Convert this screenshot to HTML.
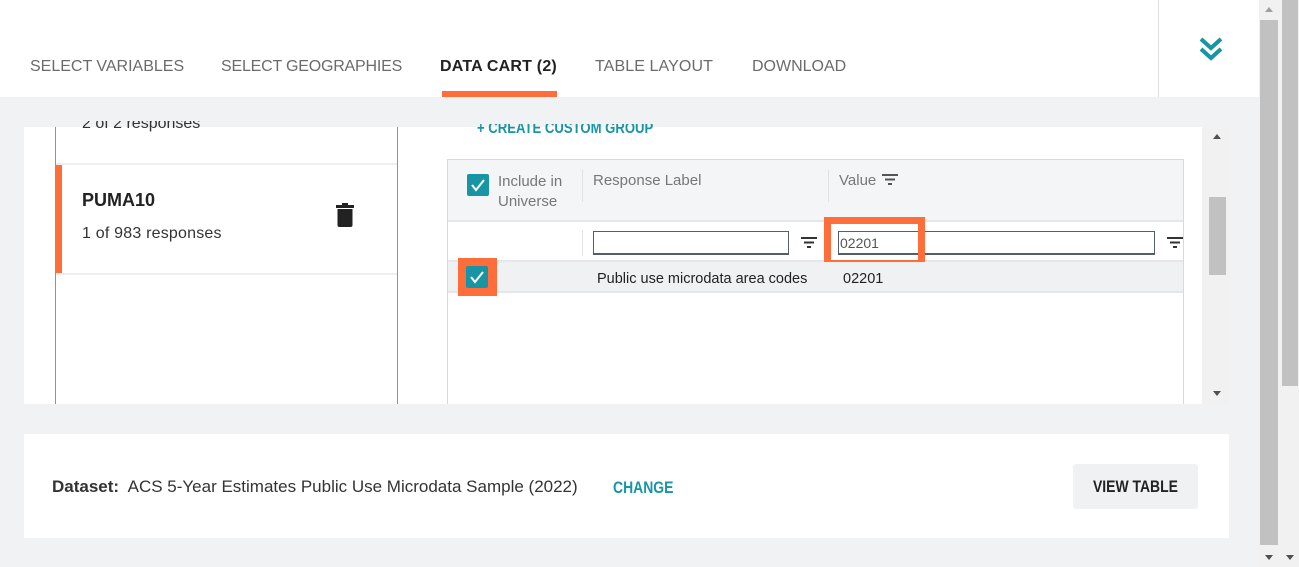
<!DOCTYPE html>
<html><head><meta charset="utf-8"><style>
*{margin:0;padding:0;box-sizing:border-box}
body{width:1299px;height:567px;overflow:hidden;background:#f1f2f4;font-family:"Liberation Sans",sans-serif;position:relative}
.a{position:absolute}
.tab{position:absolute;top:58px;font-size:16px;color:#6b6b6b;white-space:nowrap}
.cond{display:inline-block;transform:scaleX(.82);transform-origin:left center;font-weight:bold;white-space:nowrap}
.cb{position:absolute;width:22px;height:22px;background:#1795a5;border-radius:2px}
.cb svg{position:absolute;left:3px;top:3px}
</style></head><body>
<!-- header -->
<div class="a" style="left:0;top:0;width:1259px;height:97px;background:#fff"></div>
<div class="tab" style="left:30px">SELECT VARIABLES</div>
<div class="tab" style="left:221px;letter-spacing:-0.2px">SELECT GEOGRAPHIES</div>
<div class="tab" style="left:440px;color:#222;font-weight:bold;font-size:16px;letter-spacing:0.2px">DATA CART (2)</div>
<div class="a" style="left:442px;top:91px;width:115px;height:6px;background:#ff6d3a"></div>
<div class="tab" style="left:595px;letter-spacing:0.1px">TABLE LAYOUT</div>
<div class="tab" style="left:752px">DOWNLOAD</div>
<div class="a" style="left:1158px;top:0;width:1px;height:97px;background:#ddd"></div>
<svg class="a" style="left:1198px;top:36px" width="26" height="26" viewBox="0 0 26 26"><path d="M3 3 L13 12 L23 3 M3 13 L13 22 L23 13" stroke="#1795a5" stroke-width="4" fill="none"/></svg>

<!-- top white panel -->
<div class="a" style="left:24px;top:127px;width:1205px;height:277px;background:#fff"></div>
<div class="a" style="left:56px;top:121px;width:300px;height:12px;overflow:hidden">
  <div class="a" style="left:26px;top:-6px;font-size:16px;color:#333;white-space:nowrap">2 of 2 responses</div>
</div>
<div class="a" style="left:470px;top:124px;width:300px;height:14px;overflow:hidden">
  <div class="a" style="left:7px;top:-4px;font-size:16px;color:#1795a5"><span class="cond">+ CREATE CUSTOM GROUP</span></div>
</div>
<div class="a" style="left:55px;top:127px;width:1px;height:277px;background:#8a93a5"></div>
<div class="a" style="left:397px;top:127px;width:1px;height:277px;background:#8a93a5"></div>
<div class="a" style="left:56px;top:163px;width:341px;height:2px;background:#eceef0"></div>
<div class="a" style="left:56px;top:165px;width:6px;height:108px;background:#ff6d3a"></div>
<div class="a" style="left:56px;top:273px;width:341px;height:2px;background:#eceef0"></div>
<div class="a" style="left:82px;top:190px;font-size:18px;font-weight:bold;color:#222">PUMA10</div>
<div class="a" style="left:82px;top:225px;font-size:16px;color:#333;letter-spacing:0.2px">1 of 983 responses</div>
<svg class="a" style="left:335px;top:203px" width="20" height="25" viewBox="0 0 20 25"><rect x="1" y="2" width="18" height="3" fill="#222"/><rect x="7" y="0" width="6" height="3" fill="#222"/><path d="M2.5 6 H17.5 V22 Q17.5 24 15.5 24 H4.5 Q2.5 24 2.5 22 Z" fill="#222"/></svg>

<!-- table -->
<div class="a" style="left:447px;top:159px;width:737px;height:245px;border:1px solid #d6d9dd;border-bottom:none;background:#fff"></div>
<div class="a" style="left:448px;top:160px;width:735px;height:62px;background:#f4f5f6;border-bottom:2px solid #e4e6e9"></div>
<div class="cb" style="left:467px;top:174px"><svg width="16" height="16" viewBox="0 0 16 16"><path d="M2 8 L6 13 L14 3" stroke="#fff" stroke-width="2" fill="none"/></svg></div>
<div class="a" style="left:498px;top:172px;font-size:15px;color:#777;line-height:20px">Include in<br>Universe</div>
<div class="a" style="left:582px;top:170px;width:1px;height:32px;background:#e0e2e5"></div>
<div class="a" style="left:593px;top:172px;font-size:15px;color:#777">Response Label</div>
<div class="a" style="left:828px;top:170px;width:1px;height:32px;background:#e0e2e5"></div>
<div class="a" style="left:839px;top:172px;font-size:15px;color:#777">Value</div>
<svg class="a" style="left:882px;top:174px" width="16" height="12" viewBox="0 0 16 12"><rect x="0" y="0" width="16" height="2" fill="#555"/><rect x="3" y="4.5" width="10" height="2" fill="#555"/><rect x="6" y="9" width="4" height="2" fill="#555"/></svg>
<!-- filter row -->
<div class="a" style="left:448px;top:224px;width:735px;height:38px;background:#fff;border-bottom:2px solid #e4e6e9"></div>
<div class="a" style="left:582px;top:230px;width:1px;height:26px;background:#e0e2e5"></div>
<div class="a" style="left:593px;top:231px;width:196px;height:24px;border:1px solid #555c6a;border-width:1px 1px 2px 1px"></div>
<svg class="a" style="left:801px;top:237px" width="16" height="12" viewBox="0 0 16 12"><rect x="0" y="0" width="16" height="2" fill="#333"/><rect x="3" y="4.5" width="10" height="2" fill="#333"/><rect x="6" y="9" width="4" height="2" fill="#333"/></svg>
<div class="a" style="left:838px;top:231px;width:317px;height:24px;border:1px solid #555c6a;border-width:1px 1px 2px 1px"></div>
<div class="a" style="left:840px;top:235px;font-size:14px;color:#555">02201</div>
<div class="a" style="left:824px;top:217px;width:101px;height:50px;border:7px solid #ff6d3a"></div>
<svg class="a" style="left:1167px;top:237px" width="16" height="12" viewBox="0 0 16 12"><rect x="0" y="0" width="16" height="2" fill="#333"/><rect x="3" y="4.5" width="10" height="2" fill="#333"/><rect x="6" y="9" width="4" height="2" fill="#333"/></svg>
<!-- data row -->
<div class="a" style="left:448px;top:262px;width:735px;height:31px;background:#f0f1f2;border-bottom:2px solid #e4e6e9"></div>
<div class="a" style="left:458px;top:258px;width:39px;height:38px;background:#ff6d3a"></div>
<div class="cb" style="left:466px;top:266px"><svg width="16" height="16" viewBox="0 0 16 16"><path d="M2 8 L6 13 L14 3" stroke="#fff" stroke-width="2" fill="none"/></svg></div>
<div class="a" style="left:597px;top:271px;font-size:14.5px;color:#222">Public use microdata area codes</div>
<div class="a" style="left:843px;top:271px;font-size:14.5px;color:#222">02201</div>

<!-- inner scrollbar -->
<div class="a" style="left:1202px;top:127px;width:27px;height:277px;background:#f1f1f1"></div>
<div class="a" style="left:1209px;top:197px;width:17px;height:78px;background:#c1c1c1"></div>
<div class="a" style="left:1213px;top:134px;width:0;height:0;border:4px solid transparent;border-bottom:5px solid #505050;border-top:none"></div>
<div class="a" style="left:1213px;top:391px;width:0;height:0;border:4px solid transparent;border-top:5px solid #505050;border-bottom:none"></div>

<!-- bottom panel -->
<div class="a" style="left:24px;top:434px;width:1205px;height:104px;background:#fff"></div>
<div class="a" style="left:52px;top:477px;font-size:17px;color:#333;white-space:nowrap"><b>Dataset:</b>&nbsp; ACS 5-Year Estimates Public Use Microdata Sample (2022)</div>
<div class="a" style="left:613px;top:478px;font-size:17px;color:#1795a5"><span class="cond">CHANGE</span></div>
<div class="a" style="left:1073px;top:464px;width:125px;height:45px;background:#f0f1f3;border-radius:3px"></div>
<div class="a" style="left:1093px;top:477px;font-size:17px;color:#222"><span class="cond">VIEW TABLE</span></div>

<!-- page scrollbars -->
<div class="a" style="left:1259px;top:0;width:22px;height:567px;background:#f1f1f1"></div>
<div class="a" style="left:1260px;top:20px;width:18px;height:525px;background:#c1c1c1"></div>
<div class="a" style="left:1265px;top:7px;border:4px solid transparent;border-bottom:5px solid #a0a0a0;border-top:none"></div>
<div class="a" style="left:1265px;top:555px;border:4px solid transparent;border-top:5px solid #505050;border-bottom:none"></div>
<div class="a" style="left:1281px;top:0;width:18px;height:567px;background:#f1f1f1"></div>
<div class="a" style="left:1282px;top:0;width:16px;height:386px;background:#c1c1c1"></div>
<div class="a" style="left:1286px;top:555px;border:4px solid transparent;border-top:5px solid #505050;border-bottom:none"></div>
</body></html>
